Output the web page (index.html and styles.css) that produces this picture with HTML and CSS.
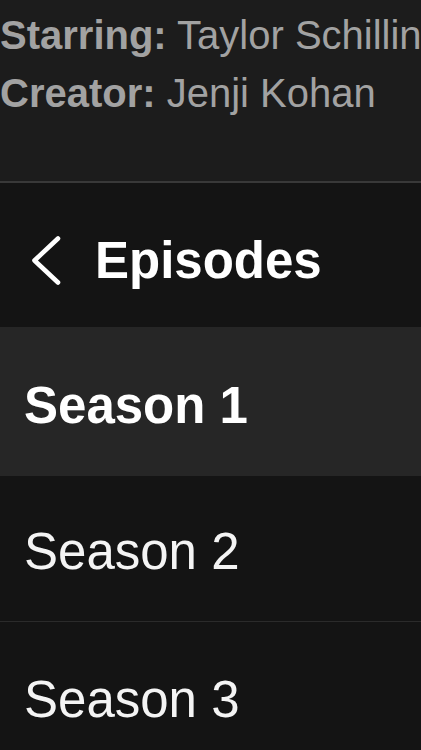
FILE: index.html
```html
<!DOCTYPE html>
<html lang="en">
  <head>
    <meta charset="UTF-8" />
    <meta name="viewport" content="width=device-width, initial-scale=1.0" />
    <title>Episodes</title>
    <link rel="stylesheet" href="styles.css">
  </head>
  <body>
    <div id="details">
      <p class="credit"><b>Starring:</b> Taylor Schilling, Laura Prepon</p>
      <p class="credit"><b>Creator:</b> Jenji Kohan</p>
    </div>

    <div id="menu">
      <div class="head">
        <svg class="back" width="32" height="50" viewBox="0 0 32 50">
          <polyline points="28,3.5 4.5,25.5 28,47.5" fill="none" stroke="#ffffff" stroke-width="4.6" stroke-linecap="round" stroke-linejoin="round" />
        </svg>
        <h1>Episodes</h1>
      </div>

      <div class="season active">Season 1</div>
      <div class="season s2">Season 2</div>
      <div class="season s3">Season 3</div>
    </div>
  </body>
</html>
```

FILE: styles.css
```css
body {
  font-family: "Liberation Sans", Arial, sans-serif;
  background-color: #141414;
  margin: 0;
  padding: 0;
  overflow: hidden;
}

#details {
  background-color: #1c1c1c;
  height: 183px;
  padding-top: 6px;
  box-sizing: border-box;
  border-bottom: 2px solid #393939;
}

.credit {
  margin: 0;
  font-size: 40px;
  line-height: 58px;
  color: #a2a2a2;
  white-space: nowrap;
  overflow: hidden;
}

.head {
  display: flex;
  align-items: center;
  height: 144px;
  padding: 10px 0 0 30px;
  box-sizing: border-box;
}

.back {
  flex-shrink: 0;
}

h1 {
  margin: 0 0 0 33px;
  font-size: 51px;
  line-height: 51px;
  color: #ffffff;
}

.season {
  display: flex;
  align-items: center;
  height: 149px;
  padding: 8px 0 0 24px;
  box-sizing: border-box;
  font-size: 51px;
  line-height: 51px;
  color: #f4f4f4;
}

.season.active {
  background-color: #262626;
  font-weight: bold;
  color: #ffffff;
}

.season.s2 {
  height: 146px;
  padding-top: 6px;
  border-bottom: 1px solid #2b2b2b;
}

.season.s3 {
  height: 148px;
  padding-top: 7px;
}
```
